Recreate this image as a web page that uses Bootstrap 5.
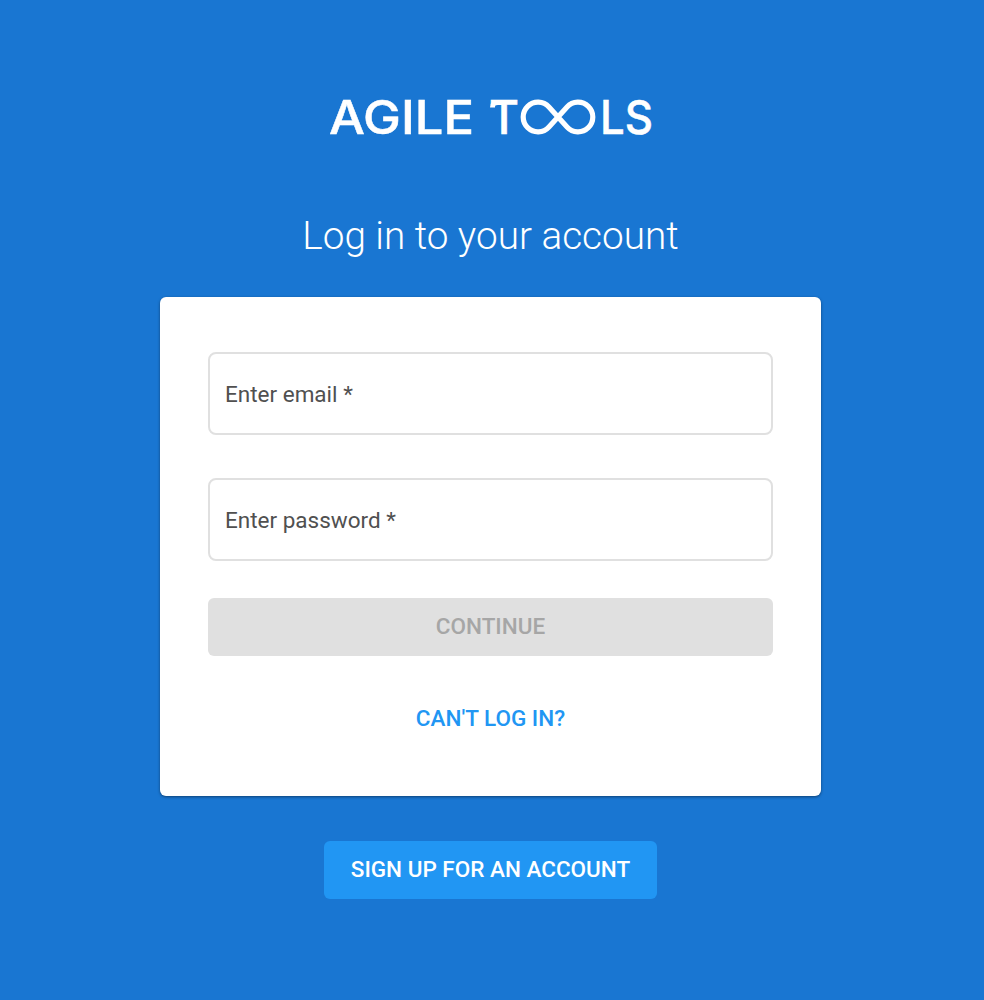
<!DOCTYPE html>
<html lang="en">
<head>
<meta charset="utf-8">
<title>Log in</title>
<link href="https://cdn.jsdelivr.net/npm/bootstrap@5.3.0/dist/css/bootstrap.min.css" rel="stylesheet">
<style>
html,body{height:1000px;overflow:hidden}
body{background:#1976d2;font-family:Roboto,"Liberation Sans",sans-serif}
.page-wrap{padding-top:96px;padding-right:3px}
.brand{display:block;width:330px;height:42px;overflow:visible}
.brand text{fill:#fff;stroke:#fff;stroke-width:.5px;font-family:Inter,"Liberation Sans",sans-serif;font-weight:500;font-size:47px}
.login-title{color:#fff;font-family:Roboto,sans-serif;font-weight:300;font-size:38.7px;line-height:44px;margin:76px 0 39px}
.login-card{width:661px;height:499px;border-radius:6px;border:0;padding:55px 48px 0;box-shadow:0 1px 3px rgba(0,0,0,.45)}
.login-input.form-control{height:83px;border:2px solid #e0e0e0;border-radius:8px;padding:0 15px;font-size:22.5px;color:#505050;font-family:Roboto,sans-serif}
.login-input.form-control::placeholder{color:#505050;opacity:1}
.login-input + .login-input{margin-top:43px}
.btn-continue.btn{height:58px;width:100%;margin-top:37px;background:#e0e0e0;border:0;border-radius:6px;color:#a6a6a6;font-weight:500;font-size:22.5px;opacity:1;padding:0}
.cant-link{display:block;margin-top:48px;line-height:28px;text-align:center;color:#2196f3;font-weight:500;font-size:22.5px;text-decoration:none}
.btn-signup.btn{width:333px;height:58px;margin-top:45px;background:#2196f3;border:0;border-radius:6px;color:#fff;font-weight:500;font-size:22.5px;padding:0}
</style>
</head>
<body>
<div class="page-wrap d-flex flex-column align-items-center">
  <svg class="brand" viewBox="0 0 330 42" role="img" aria-label="AGILE TOOLS">
    <text x="3" y="38" textLength="145" lengthAdjust="spacingAndGlyphs">AGILE</text>
    <text x="163" y="38" textLength="30" lengthAdjust="spacingAndGlyphs">T</text>
    <path d="M166.500 11.500C166.500 8 168 6.500 172 6.500H176" fill="none" stroke="#fff" stroke-width="5"/>
    <path d="M222.950 11.040L241.050 30.960A14.800 14.800 0 1 0 241.050 11.040L222.950 30.960A14.800 14.800 0 1 1 222.950 11.040Z" fill="none" stroke="#fff" stroke-width="5.200"/>
    <text x="274" y="38" textLength="53" lengthAdjust="spacingAndGlyphs">LS</text>
  </svg>
  <h1 class="login-title">Log in to your account</h1>
  <div class="card login-card">
    <form>
      <input class="form-control login-input" type="email" placeholder="Enter email *">
      <input class="form-control login-input" type="password" placeholder="Enter password *">
      <button class="btn btn-continue" type="button" disabled>CONTINUE</button>
      <a class="cant-link" href="#">CAN'T LOG IN?</a>
    </form>
  </div>
  <button class="btn btn-signup" type="button">SIGN UP FOR AN ACCOUNT</button>
</div>
<script src="https://cdn.jsdelivr.net/npm/bootstrap@5.3.0/dist/js/bootstrap.bundle.min.js"></script>
</body>
</html>
